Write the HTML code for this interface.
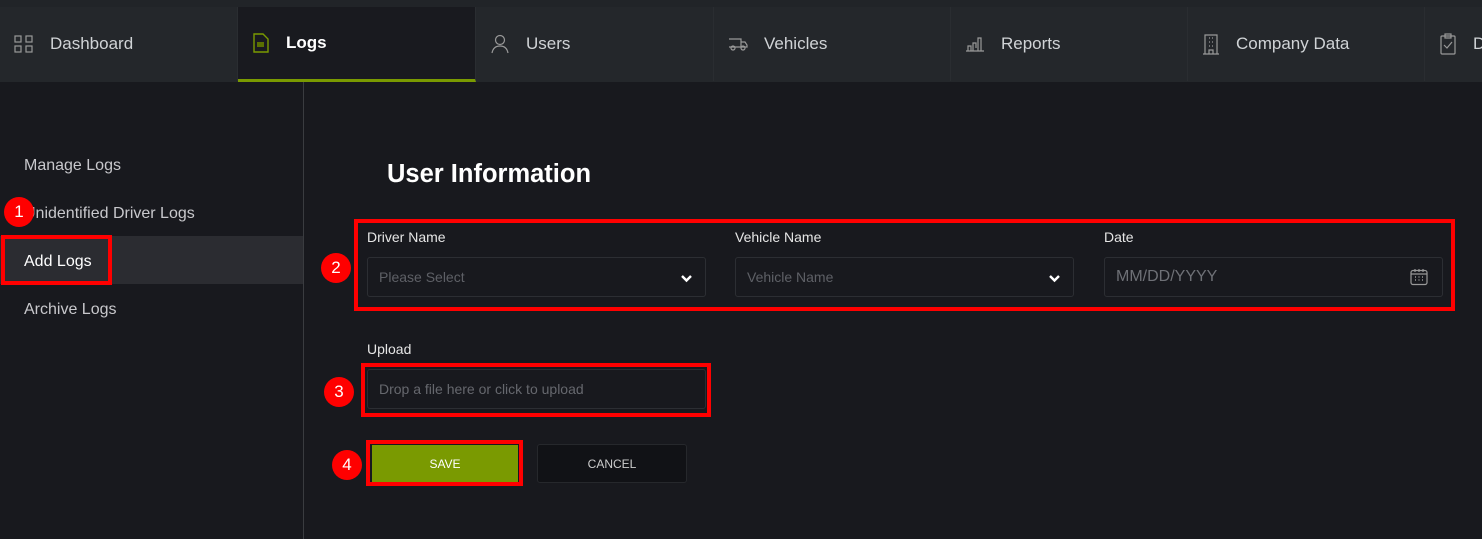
<!DOCTYPE html>
<html><head><style>
*{box-sizing:border-box;margin:0;padding:0}
body{width:1482px;height:539px;background:#18191e;font-family:"Liberation Sans",sans-serif;color:#ddd;position:relative;overflow:hidden}
.abs{position:absolute}
.top{left:0;top:0;width:1482px;height:7px;background:#212428}
.nav{left:0;top:7px;width:1482px;height:75px;background:#24272b}
.tab{position:absolute;top:0;height:74px;display:flex;align-items:center;font-size:17px;color:#d0d3d6;border-right:1px solid #2a2d31}
.tab svg{margin-right:16px}
.side a{position:absolute;left:24px;font-size:16px;color:#c8c8cc}
.lbl{position:absolute;font-size:14px;color:#e6e6e6}
.inp{position:absolute;height:40px;border:1px solid #2c2e33;border-radius:3px;background:#18191e;font-size:14px;color:#5e6066;padding-left:11px;display:flex;align-items:center}
.red{position:absolute;border:4px solid #f00}
.c{position:absolute;width:30px;height:30px;border-radius:50%;background:#f00;color:#fff;font-size:17px;display:flex;align-items:center;justify-content:center}
</style></head><body>
<div class="abs top"></div>
<div class="abs nav">
 <div class="tab" style="left:0;width:238px;padding-left:14px"><svg width="20" height="18" viewBox="0 0 20 18" fill="none" stroke="#999" stroke-width="1.2"><rect x="1" y="1" width="6" height="6"/><rect x="12" y="1" width="6" height="6"/><rect x="1" y="11" width="6" height="6"/><rect x="12" y="11" width="6" height="6"/></svg>Dashboard</div>
 <div class="tab" style="left:238px;width:238px;height:75px;background:#191a1f;padding-left:14px;color:#fff;font-weight:bold;border-bottom:3px solid #7a9a01"><svg width="18" height="20" viewBox="0 0 18 20" fill="none" stroke="#7a9a01" stroke-width="1.4"><path d="M2 1h9l5 5v13H2z"/><rect x="5" y="9" width="7" height="5" fill="#5a7001" stroke="none"/></svg>Logs</div>
 <div class="tab" style="left:476px;width:238px;padding-left:14px"><svg width="20" height="20" viewBox="0 0 20 20" fill="none" stroke="#999" stroke-width="1.2"><circle cx="10" cy="6" r="4.5"/><path d="M2 19c1-5 4-7 8-7s7 2 8 7"/></svg>Users</div>
 <div class="tab" style="left:714px;width:237px;padding-left:14px"><svg width="20" height="14" viewBox="0 0 20 14" fill="none" stroke="#999" stroke-width="1.2"><path d="M1 2h12v8H1M13 5h4l2 3v2h-6"/><circle cx="5" cy="11" r="2"/><circle cx="15" cy="11" r="2"/></svg>Vehicles</div>
 <div class="tab" style="left:951px;width:237px;padding-left:14px"><svg width="20" height="16" viewBox="0 0 20 16" fill="none" stroke="#999" stroke-width="1.2"><path d="M1 15h18M3 15V10h3v5M8 15V7h3v5M13 15V2h3v13"/></svg>Reports</div>
 <div class="tab" style="left:1188px;width:237px;padding-left:14px"><svg width="18" height="22" viewBox="0 0 18 22" fill="none" stroke="#999" stroke-width="1.2"><path d="M3 21V2h12v19M1 21h16M7 5h1M10 5h1M7 9h1M10 9h1M7 13h1M10 13h1M7 21v-4h4v4"/></svg>Company Data</div>
 <div class="tab" style="left:1425px;width:100px;padding-left:14px"><svg width="18" height="22" viewBox="0 0 18 22" fill="none" stroke="#999" stroke-width="1.2"><rect x="2" y="3" width="14" height="18" rx="1"/><rect x="6" y="1" width="6" height="4"/><path d="M5 12l3 3 5-6"/></svg>D</div>
</div>
<div class="abs" style="left:303px;top:82px;width:1px;height:457px;background:#3a3c40"></div>
<div class="abs" style="left:0;top:236px;width:303px;height:48px;background:#2b2c31"></div>
<div class="side">
 <a style="top:157px">Manage Logs</a>
 <a style="top:205px">Unidentified Driver Logs</a>
 <a style="top:253px;color:#fff">Add Logs</a>
 <a style="top:301px">Archive Logs</a>
</div>
<div class="abs" style="left:387px;top:160px;font-size:25.5px;font-weight:bold;color:#fff">User Information</div>
<div class="lbl" style="left:367px;top:229px">Driver Name</div>
<div class="lbl" style="left:735px;top:229px">Vehicle Name</div>
<div class="lbl" style="left:1104px;top:229px">Date</div>
<div class="inp" style="left:367px;top:257px;width:339px">Please Select<svg class="abs" style="right:12px;top:16px" width="13" height="9" viewBox="0 0 13 9"><path d="M2 2l4.5 4.5L11 2" stroke="#fff" stroke-width="2.4" fill="none"/></svg></div>
<div class="inp" style="left:735px;top:257px;width:339px">Vehicle Name<svg class="abs" style="right:12px;top:16px" width="13" height="9" viewBox="0 0 13 9"><path d="M2 2l4.5 4.5L11 2" stroke="#fff" stroke-width="2.4" fill="none"/></svg></div>
<div class="inp" style="left:1104px;top:257px;width:339px;font-size:16px;color:#6e7076">MM/DD/YYYY<svg class="abs" style="right:14px;top:10px" width="18" height="18" viewBox="0 0 18 18" fill="none" stroke="#999" stroke-width="1.2"><rect x="1" y="2.5" width="16" height="14" rx="2"/><path d="M5 1v3M9 1v3M13 1v3M1 6h16"/><path d="M5 9h1M8.5 9h1M12 9h1M5 12h1M8.5 12h1M12 12h1" stroke-width="1.4"/></svg></div>
<div class="lbl" style="left:367px;top:341px">Upload</div>
<div class="inp" style="left:367px;top:369px;width:339px;height:40px;color:#66686e">Drop a file here or click to upload</div>
<div class="abs" style="left:372px;top:445px;width:146px;height:37px;background:#7a9a01;color:#fff;font-size:12px;display:flex;align-items:center;justify-content:center">SAVE</div>
<div class="abs" style="left:537px;top:444px;width:150px;height:39px;background:#111216;border:1px solid #26282c;border-radius:3px;color:#ccc;font-size:12px;display:flex;align-items:center;justify-content:center">CANCEL</div>
<div class="red" style="left:1px;top:235px;width:111px;height:50px"></div>
<div class="red" style="left:354px;top:219px;width:1101px;height:92px"></div>
<div class="red" style="left:361px;top:363px;width:350px;height:54px"></div>
<div class="red" style="left:366px;top:440px;width:157px;height:46px"></div>
<div class="c" style="left:4px;top:197px">1</div>
<div class="c" style="left:321px;top:253px">2</div>
<div class="c" style="left:324px;top:377px">3</div>
<div class="c" style="left:332px;top:450px">4</div>
</body></html>
